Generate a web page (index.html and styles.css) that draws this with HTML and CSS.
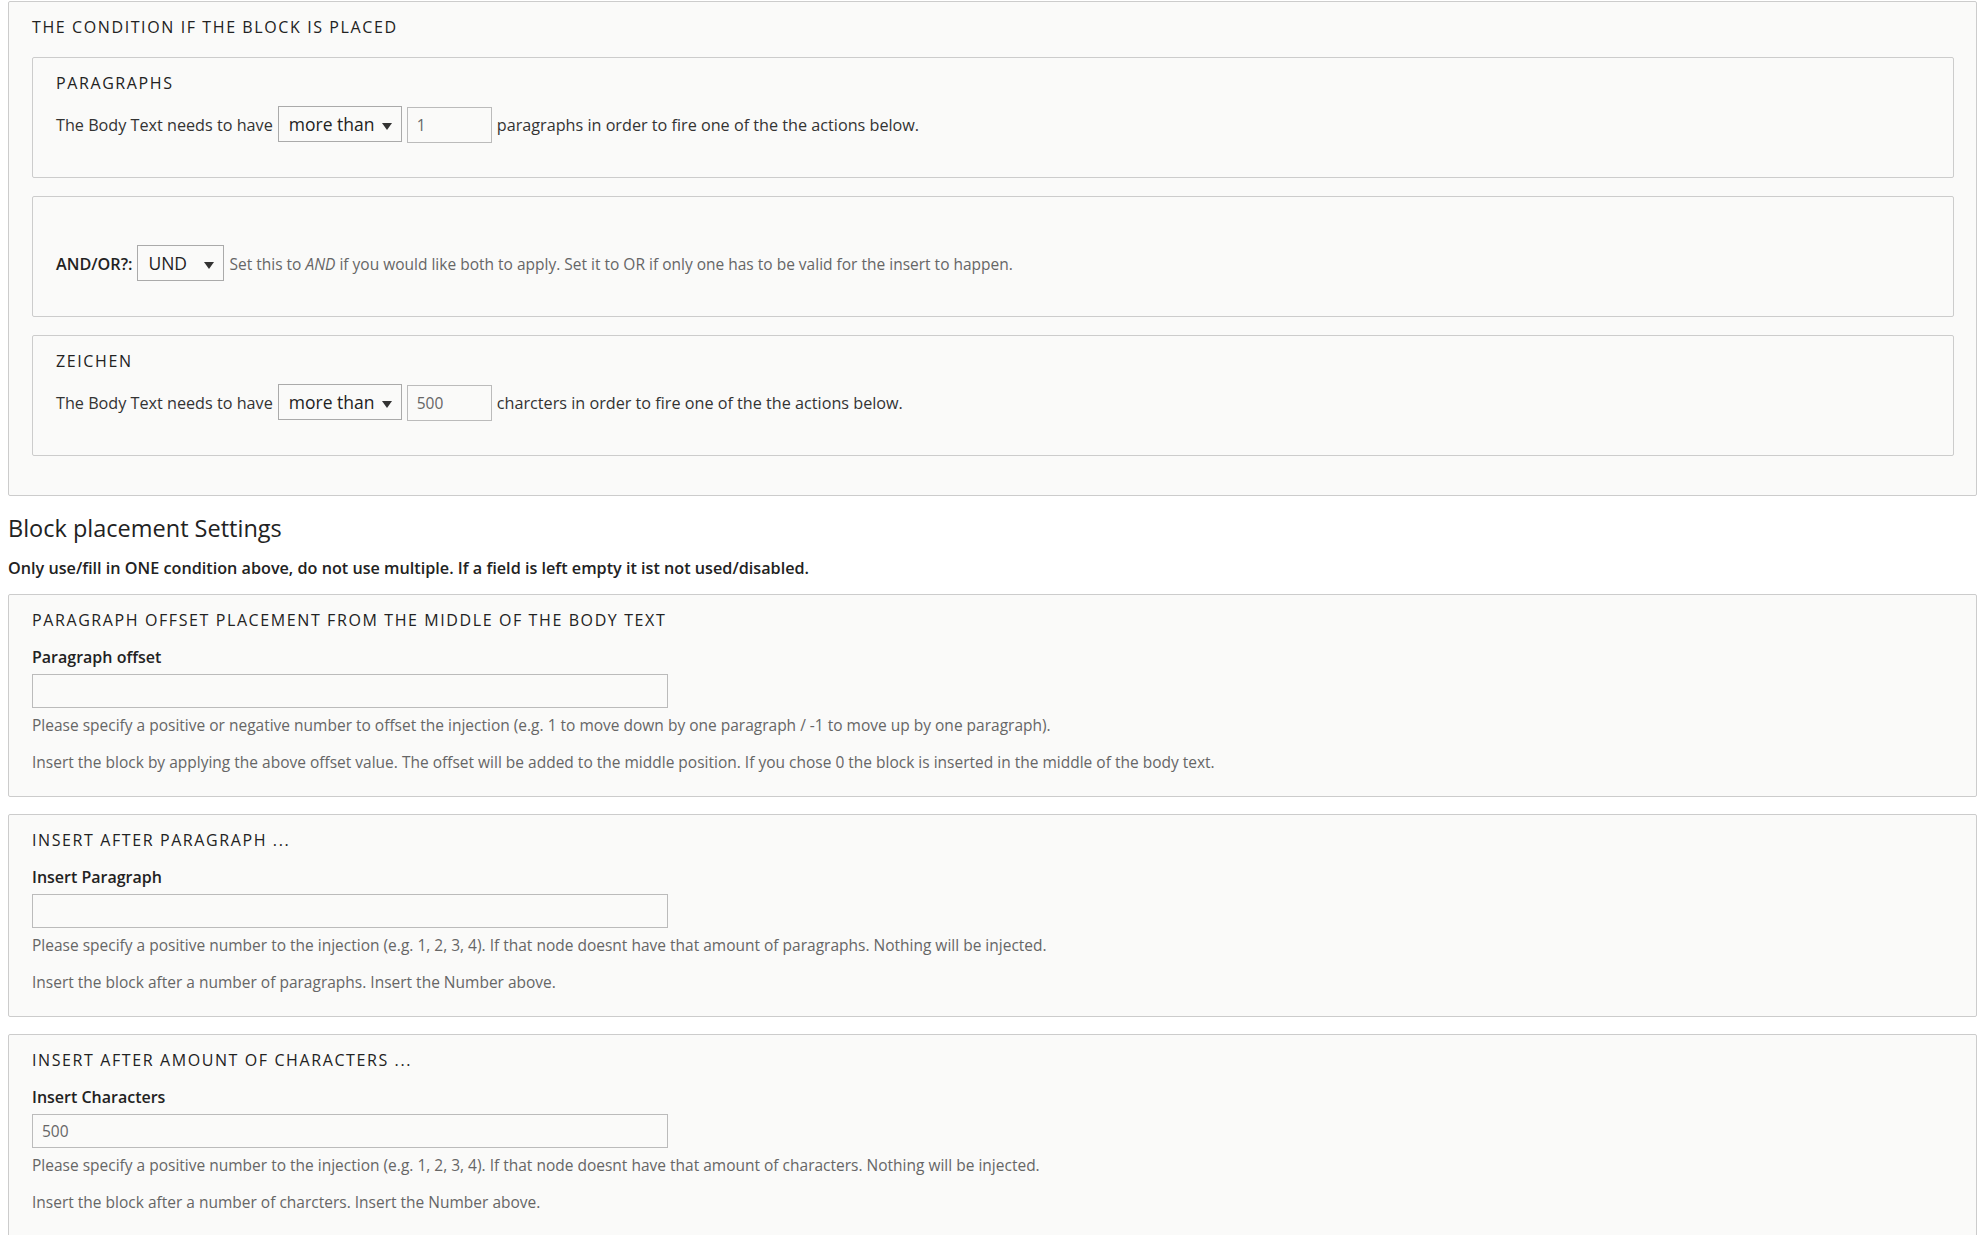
FILE: index.html
```html
<!DOCTYPE html>
<html lang="en">
<head>
  <meta charset="UTF-8">
  <title>Block placement settings</title>
  <link rel="stylesheet" href="styles.css">
</head>
<body>

<div class="fieldset conditions">
  <div class="legend">The condition if the block is placed</div>

  <div class="fieldset inner first">
    <div class="legend">Paragraphs</div>
    <div class="row">
      The Body Text needs to have
      <span class="select-wrap"><select class="select"><option>more than</option><option>less than</option></select></span>
      <input type="text" class="small-input" value="1" />
      paragraphs in order to fire one of the the actions below.
    </div>
  </div>

  <div class="fieldset inner">
    <div class="legend empty"></div>
    <div class="row">
      <label class="strong">AND/OR?:</label>
      <span class="select-wrap"><select class="select short"><option>UND</option><option>ODER</option></select></span>
      <span class="hint">Set this to <em>AND</em> if you would like both to apply. Set it to OR if only one has to be valid for the insert to happen.</span>
    </div>
  </div>

  <div class="fieldset inner">
    <div class="legend">Zeichen</div>
    <div class="row">
      The Body Text needs to have
      <span class="select-wrap"><select class="select"><option>more than</option><option>less than</option></select></span>
      <input type="text" class="small-input" value="500" />
      charcters in order to fire one of the the actions below.
    </div>
  </div>
</div>

<h2 class="section-title">Block placement Settings</h2>
<p class="note">Only use/fill in ONE condition above, do not use multiple. If a field is left empty it ist not used/disabled.</p>

<div class="fieldset">
  <div class="legend">Paragraph offset placement from the middle of the body text</div>
  <label class="field-label">Paragraph offset</label>
  <input type="text" class="text-input" value="" />
  <div class="hint desc">Please specify a positive or negative number to offset the injection (e.g. 1 to move down by one paragraph / -1 to move up by one paragraph).</div>
  <div class="hint desc second">Insert the block by applying the above offset value. The offset will be added to the middle position. If you chose 0 the block is inserted in the middle of the body text.</div>
</div>

<div class="fieldset">
  <div class="legend">Insert after paragraph ...</div>
  <label class="field-label">Insert Paragraph</label>
  <input type="text" class="text-input" value="" />
  <div class="hint desc">Please specify a positive number to the injection (e.g. 1, 2, 3, 4). If that node doesnt have that amount of paragraphs. Nothing will be injected.</div>
  <div class="hint desc second">Insert the block after a number of paragraphs. Insert the Number above.</div>
</div>

<div class="fieldset">
  <div class="legend">Insert after amount of characters ...</div>
  <label class="field-label">Insert Characters</label>
  <input type="text" class="text-input" value="500" />
  <div class="hint desc">Please specify a positive number to the injection (e.g. 1, 2, 3, 4). If that node doesnt have that amount of characters. Nothing will be injected.</div>
  <div class="hint desc second">Insert the block after a number of charcters. Insert the Number above.</div>
</div>

</body>
</html>
```

FILE: styles.css
```css
body {
  margin: 0 8px;
  padding-top: 1px;
  font-family: "Open Sans", "Noto Sans", sans-serif;
  font-size: 16px;
  color: #333;
  background: #fff;
}
.fieldset {
  background: #fafaf9;
  border: 1px solid #ccc;
  border-radius: 2px;
  padding: 15px 22px 24px 23px;
  margin-bottom: 17px;
}
.fieldset.conditions {
  padding-bottom: 21px;
}
.fieldset.inner {
  margin: 0 0 18px 0;
  padding: 15px 24px 34px 23px;
}
.fieldset.inner.first {
  margin-top: 20px;
}
.legend {
  font-size: 16px;
  line-height: 20px;
  font-weight: 400;
  text-transform: uppercase;
  letter-spacing: 0.1em;
  color: #222;
}
.legend.empty {
  height: 20px;
}
.row {
  margin-top: 13px;
  line-height: 36px;
  display: flex;
  align-items: center;
  gap: 5px;
  font-size: 16.2px;
  white-space: nowrap;
}
.strong {
  font-weight: 600;
  color: #222;
}
.select-wrap {
  position: relative;
  display: inline-block;
}
.select-wrap::after {
  content: "";
  position: absolute;
  right: 10px;
  top: 17px;
  border-left: 5px solid transparent;
  border-right: 5px solid transparent;
  border-top: 7px solid #333;
  pointer-events: none;
}
.select {
  appearance: none;
  -webkit-appearance: none;
  font-family: inherit;
  font-size: 17.5px;
  color: #222;
  background: #fafaf9;
  border: 1px solid #aaa;
  border-radius: 0;
  height: 36px;
  width: 124px;
  padding: 0 0 0 10px;
}
.select.short {
  width: 87px;
}
.small-input, .text-input {
  font-family: inherit;
  font-size: 15.5px;
  color: #666;
  background: #fafaf9;
  border: 1px solid #bbb;
  border-radius: 0;
  box-sizing: border-box;
  padding: 0 9px;
}
.small-input {
  width: 85px;
  height: 36px;
}
.hint {
  color: #666;
  font-size: 15.5px;
}
.section-title {
  font-size: 23.5px;
  font-weight: 500;
  line-height: 30px;
  color: #222;
  margin: 12px 0 13px 0;
}
.note {
  font-weight: 600;
  font-size: 16.2px;
  line-height: 24px;
  color: #222;
  margin: 0 0 14px 0;
}
.field-label {
  display: block;
  margin-top: 16px;
  font-weight: 600;
  font-size: 16px;
  line-height: 22px;
  color: #222;
}
.text-input {
  display: block;
  margin-top: 6px;
  width: 636px;
  height: 34px;
}
.desc {
  margin-top: 7px;
  line-height: 20px;
}
.desc.second {
  margin-top: 17px;
}
```
